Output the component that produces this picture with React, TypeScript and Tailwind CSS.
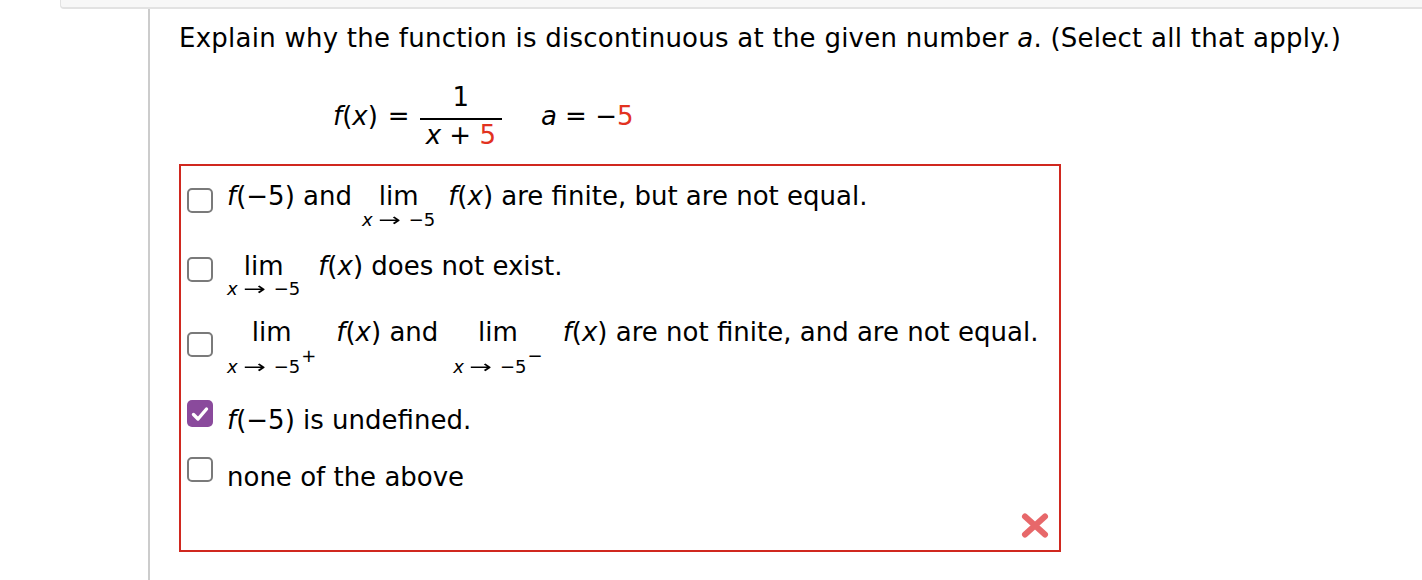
import React from 'react'

const FONT = "[font-family:'DejaVu_Sans',Verdana,sans-serif]"

function Checkbox({ checked, className }: { checked?: boolean; className?: string }) {
  if (checked) {
    return (
      <span className={`flex h-[27px] w-[26px] shrink-0 items-center justify-center rounded-[5px] bg-[#8a4a9c] ${className ?? ''}`}>
        <svg width="18" height="16" viewBox="0 0 18 16" fill="none">
          <path d="M2.5 8.5 L7 13 L15.5 3" stroke="white" strokeWidth="3.4" strokeLinecap="round" strokeLinejoin="round" />
        </svg>
      </span>
    )
  }
  return <span className={`block h-[25px] w-[26px] shrink-0 rounded-[5px] border-2 border-[#7a7a7a] bg-white ${className ?? ''}`} />
}

function Lim({ sup, subClass }: { sup?: string; subClass?: string }) {
  return (
    <span className="inline-flex flex-col items-center">
      <span className="leading-[30px]">lim</span>
      <span className={`whitespace-nowrap text-[18px] leading-[18px] ${subClass ?? ''}`}>
        <i>x</i>
        <span className="mx-[5px] inline-block w-[23px] scale-x-150 text-center">→</span>
        <span className="ml-[3px]">−5</span>
        {sup && <span className="relative -top-[11px] ml-[1px]">{sup}</span>}
      </span>
    </span>
  )
}

const F = ({ arg = 'x' }: { arg?: string }) => (
  <span className="whitespace-nowrap">
    <i>f</i>({arg === 'x' ? <i>x</i> : arg})
  </span>
)

export default function App() {
  return (
    <div className={`h-[580px] w-[1422px] overflow-hidden bg-white text-[26px] text-black ${FONT}`}>
      <div className="ml-[60px] h-[9px] rounded-bl-[4px] border-b-2 border-l border-[#e2e2e2] bg-[#f7f7f7]" />
      <div className="flex h-[571px]">
        <div className="w-[148px] shrink-0" />
        <div className="w-[2px] shrink-0 bg-[#cccccc]" />
        <div className="pl-[29px] pt-[14px]">
          <p className="leading-[30px] tracking-[0.25px]">
            Explain why the function is discontinuous at the given number <i>a</i>. (Select all that apply.)
          </p>

          <div className="mt-[29px] flex items-center pl-[154px]">
            <F />
            <span className="mx-[10px]">=</span>
            <span className="inline-flex flex-col items-center">
              <span className="leading-[30px]">1</span>
              <span className="mt-[6px] h-[2px] w-full bg-black" />
              <span className="px-[6px] leading-[30px]">
                <i>x</i> + <span className="text-[#e2321f]">5</span>
              </span>
            </span>
            <span className="ml-[39px]">
              <i>a</i> = −<span className="text-[#e2321f]">5</span>
            </span>
          </div>

          <div className="mt-[14px] flex h-[388px] w-[882px] flex-col border-2 border-[#d0281f] pl-[6px] pr-[9px] pb-[11px] pt-[15px]">
            <div className="flex items-start">
              <Checkbox className="mt-[7px]" />
              <div className="ml-[14px] flex items-baseline leading-[30px]">
                <span>
                  <F arg="−5" /> and
                </span>
                <span className="ml-[10px]">
                  <Lim />
                </span>
                <span className="ml-[13px]">
                  <F /> are finite, but are not equal.
                </span>
              </div>
            </div>

            <div className="mt-[22px] flex items-start">
              <Checkbox className="mt-[6px]" />
              <div className="ml-[14px] flex items-baseline leading-[30px]">
                <Lim subClass="-mt-[1px]" />
                <span className="ml-[18px]">
                  <F /> does not exist.
                </span>
              </div>
            </div>

            <div className="mt-[19px] flex items-start">
              <Checkbox className="mt-[15px]" />
              <div className="ml-[14px] flex items-baseline leading-[30px]">
                <Lim sup="+" subClass="mt-[11px]" />
                <span className="ml-[20px]">
                  <F /> and
                </span>
                <span className="ml-[15px]">
                  <Lim sup="−" subClass="mt-[11px]" />
                </span>
                <span className="ml-[20px]">
                  <F /> are not finite, and are not equal.
                </span>
              </div>
            </div>

            <div className="mt-[29px] flex items-start">
              <Checkbox checked className="-mt-[5px]" />
              <div className="ml-[14px] leading-[30px]">
                <F arg="−5" /> is undefined.
              </div>
            </div>

            <div className="mt-[27px] flex items-start">
              <Checkbox className="-mt-[5px]" />
              <div className="ml-[14px] leading-[30px]">none of the above</div>
            </div>

            <div className="mt-auto flex justify-end">
              <svg width="30" height="27" viewBox="0 0 30 27" className="blur-[0.4px]">
                <path d="M5 4.5 L25 22.5 M25 4.5 L5 22.5" stroke="#e4585a" strokeOpacity="0.9" strokeWidth="6" strokeLinecap="round" />
              </svg>
            </div>
          </div>
        </div>
      </div>
    </div>
  )
}
